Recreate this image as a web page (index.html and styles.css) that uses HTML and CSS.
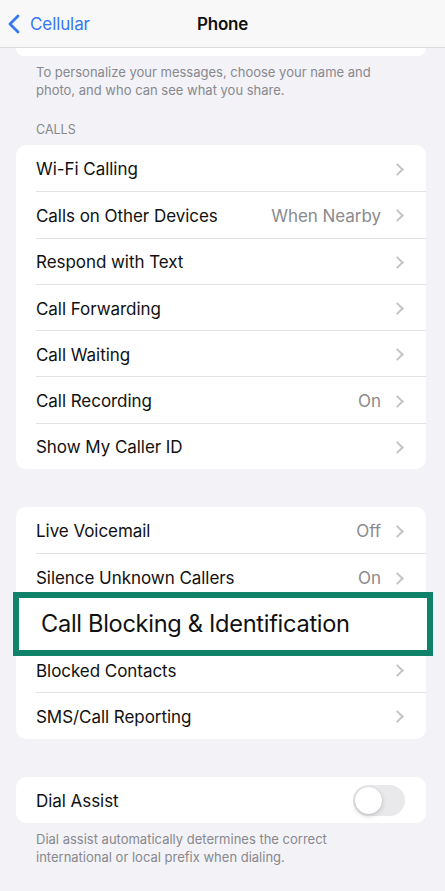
FILE: index.html
```html
<!DOCTYPE html>
<html lang="en">
<head>
    <meta charset="UTF-8">
    <meta name="viewport" content="width=device-width, initial-scale=1.0">
    <title>Phone</title>
    <link rel="stylesheet" href="styles.css">
</head>
<body>
    <!-- Barra di navigazione -->
    <header class="navbar">
        <a class="back" href="#">
            <svg class="back-icon" width="14" height="22" viewBox="0 0 14 22">
                <path d="M11 3 L3 11 L11 19" fill="none" stroke="#3478f6" stroke-width="2.8" stroke-linecap="round" stroke-linejoin="round"/>
            </svg>
            <span>Cellular</span>
        </a>
        <div class="nav-title">Phone</div>
    </header>

    <main class="content">
        <div class="card card-tail"></div>
        <p class="footnote">To personalize your messages, choose your name and photo, and who can see what you share.</p>

        <div class="section-header">CALLS</div>
        <div class="card">
            <div class="row"><span class="label">Wi-Fi Calling</span><span class="chev"></span></div>
            <div class="row"><span class="label">Calls on Other Devices</span><span class="value">When Nearby</span><span class="chev"></span></div>
            <div class="row"><span class="label">Respond with Text</span><span class="chev"></span></div>
            <div class="row"><span class="label">Call Forwarding</span><span class="chev"></span></div>
            <div class="row"><span class="label">Call Waiting</span><span class="chev"></span></div>
            <div class="row"><span class="label">Call Recording</span><span class="value">On</span><span class="chev"></span></div>
            <div class="row"><span class="label">Show My Caller ID</span><span class="chev"></span></div>
        </div>

        <div class="card card-gap">
            <div class="row"><span class="label">Live Voicemail</span><span class="value">Off</span><span class="chev"></span></div>
            <div class="row"><span class="label">Silence Unknown Callers</span><span class="value">On</span><span class="chev"></span></div>
            <div class="row row-marked">
                <!-- Evidenziazione -->
                <div class="highlight">Call Blocking &amp; Identification</div>
            </div>
            <div class="row"><span class="label">Blocked Contacts</span><span class="chev"></span></div>
            <div class="row"><span class="label">SMS/Call Reporting</span><span class="chev"></span></div>
        </div>

        <div class="card card-gap">
            <div class="row"><span class="label">Dial Assist</span><span class="toggle"><span class="knob"></span></span></div>
        </div>
        <p class="footnote">Dial assist automatically determines the correct international or local prefix when dialing.</p>
    </main>
</body>
</html>
```

FILE: styles.css
```css
body {
    margin: 0;
    background-color: #f2f2f7;
    font-family: Inter, "Noto Sans", sans-serif;
    color: #111;
}
.navbar {
    height: 47px;
    background-color: #f8f8f8;
    border-bottom: 1px solid #dcdcdc;
    display: flex;
    align-items: center;
    position: relative;
}
.back {
    display: flex;
    align-items: center;
    gap: 9px;
    padding-left: 7px;
    color: #3478f6;
    text-decoration: none;
    font-size: 17px;
    letter-spacing: -0.1px;
    margin-top: 1px;
}
.nav-title {
    position: absolute;
    left: 0;
    right: 0;
    text-align: center;
    font-size: 17px;
    font-weight: 600;
    letter-spacing: -0.2px;
    pointer-events: none;
    margin-top: 1px;
}
.content {
    padding: 0 19px 0 16px;
}
.card {
    background-color: #fff;
    border-radius: 10px;
}
.card-tail {
    height: 8px;
    border-radius: 0 0 10px 10px;
}
.card-gap {
    margin-top: 38px;
}
.footnote {
    margin: 7px 0 0;
    padding: 0 20px;
    font-size: 13px;
    line-height: 18px;
    color: #88888d;
}
.section-header {
    margin-top: 23px;
    padding: 0 20px 7px;
    font-size: 12.5px;
    line-height: 16px;
    color: #88888d;
}
.row {
    height: 46.3px;
    display: flex;
    align-items: center;
    margin-left: 20px;
    padding-right: 22px;
    border-top: 1px solid #e3e3e6;
    box-sizing: border-box;
    font-size: 17px;
    letter-spacing: -0.05px;
    padding-top: 2px;
}
.row:first-child {
    border-top: none;
}
.label {
    flex: 1;
}
.value {
    color: #8a8a8e;
    margin-right: 12px;
}
.chev {
    width: 7px;
    height: 7px;
    border-top: 2px solid #c4c4c7;
    border-right: 2px solid #c4c4c7;
    transform: rotate(45deg);
    margin-right: 2px;
}
.row-marked {
    position: relative;
}
.highlight {
    position: absolute;
    top: -9px;
    left: -23px;
    right: -7px;
    bottom: -10px;
    border: 6px solid #11826a;
    background-color: #fff;
    display: flex;
    align-items: center;
    padding-left: 22px;
    font-size: 23.6px;
    letter-spacing: -0.3px;
    color: #111;
}
.toggle {
    width: 52px;
    height: 31px;
    border-radius: 16px;
    background-color: #e9e9eb;
    position: relative;
    margin-right: -1px;
}
.knob {
    position: absolute;
    top: 2px;
    left: 2px;
    width: 27px;
    height: 27px;
    border-radius: 50%;
    background-color: #fff;
    box-shadow: 0 2px 5px rgba(0, 0, 0, 0.18), 0 0 1px rgba(0, 0, 0, 0.1);
}
```
